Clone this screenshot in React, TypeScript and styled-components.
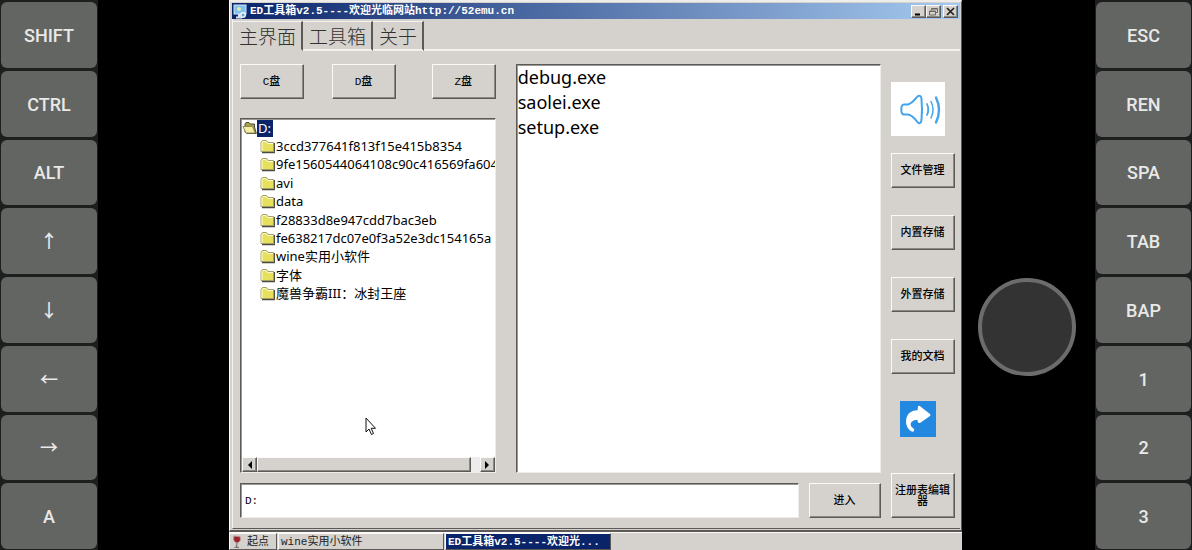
import React from "react";
import styled, { createGlobalStyle, css } from "styled-components";

const face = "#d5d2ce";
const shade = "#5c5a58";
const navy = "#0a246a";
const mono = `"Liberation Mono", "Noto Sans CJK SC", monospace`;
const sans = `"Noto Sans", "Noto Sans CJK SC", sans-serif`;

const GlobalStyle = createGlobalStyle`
  *, *::before, *::after { box-sizing: border-box; }
  body { margin: 0; background: #000; font-family: ${sans}; color: #000; }
  button, input { margin: 0; font: inherit; color: inherit; border-radius: 0; }
  ul { margin: 0; padding: 0; list-style: none; }
`;

const raised = css`
  border: 1px solid;
  border-color: #fbfaf8 ${shade} ${shade} #fbfaf8;
  box-shadow: inset -1px -1px 0 #8a8884;
`;

const sunken = css`
  border: 1px solid;
  border-color: ${shade} #efedea #efedea ${shade};
  box-shadow: inset 1px 1px 0 #9a9894;
`;

const Device = styled.div`
  display: grid;
  grid-template-columns: 98px 131px minmax(0, 1fr) 133px 97px;
  min-height: 100vh;
`;

const KeyColumn = styled.nav`
  display: flex;
  flex-direction: column;
  gap: 3px;
  padding: 2px 1px 1px;
  background: #1d1f1e;
`;

const Key = styled.button`
  flex: 1;
  padding: 2px 0 0;
  border: 0;
  border-radius: 6px;
  background: #636562;
  color: #e9e9e8;
  font-family: Roboto, "Noto Sans CJK SC", sans-serif;
  font-weight: 500;
  font-size: 18px;
  line-height: 24px;
`;

const Desktop = styled.main`
  display: flex;
  flex-direction: column;
  background: ${face};
`;

const Frame = styled.section`
  display: flex;
  flex: 1;
  flex-direction: column;
  padding: 1px 1px 1px 2px;
  border-top: 2px solid #efedea;
  border-left: 1px solid #fff;
  border-right: 1px solid ${shade};
  border-bottom: 2px solid ${shade};
`;

const TitleBar = styled.header`
  display: flex;
  align-items: center;
  height: 16px;
  padding: 0 2px 0 1px;
  gap: 3px;
  background: linear-gradient(90deg, ${navy}, #a6caf0);
  color: #fff;
`;

const Title = styled.h1`
  flex: 1;
  margin: 0;
  overflow: hidden;
  white-space: nowrap;
  font: bold 11px/16px ${mono};
`;

const Controls = styled.div`
  display: flex;
`;

const ControlButton = styled.button<{ $apart?: boolean }>`
  ${raised}
  display: grid;
  place-items: center;
  width: 15px;
  height: 13px;
  padding: 0;
  margin-left: ${(p) => (p.$apart ? "2px" : "0")};
  background: ${face};
`;

const Tabs = styled.div`
  display: flex;
  height: 32px;
  padding-top: 2px;
  border-left: 1px solid #f5f3f0;
`;

const Tab = styled.button<{ $active?: boolean }>`
  padding: 0 5px 0 6px;
  border: 0;
  border-top: 1px solid #f5f3f0;
  border-right: 2px solid ${shade};
  border-bottom: 2px solid ${(p) => (p.$active ? face : "#f2f0ed")};
  background: none;
  color: #34322f;
  font-family: "Noto Sans CJK SC", sans-serif;
  font-weight: 300;
  font-size: 19px;
  line-height: 24px;
`;

const TabFiller = styled.div`
  flex: 1;
  border-bottom: 2px solid #f2f0ed;
`;

const Page = styled.div`
  display: flex;
  flex: 1;
  gap: 10px;
  padding: 13px 5px 10px 7px;
  border-left: 1px solid #f5f3f0;
  border-bottom: 1px solid ${shade};
`;

const Work = styled.div`
  display: flex;
  flex: 1;
  min-width: 0;
  flex-direction: column;
  gap: 10px;
`;

const Panes = styled.div`
  display: grid;
  flex: 1;
  grid-template-columns: 7fr 10fr;
  gap: 20px;
`;

const DriveSide = styled.div`
  display: flex;
  min-width: 0;
  flex-direction: column;
  gap: 19px;
`;

const Drives = styled.div`
  display: flex;
  gap: 28px;

  & > :last-child { margin-left: auto; }
`;

const PushButton = styled.button<{ $wide?: boolean; $tall?: boolean }>`
  ${raised}
  flex: none;
  width: ${(p) => (p.$wide ? "72px" : "64px")};
  height: ${(p) => (p.$tall ? "45px" : "35px")};
  padding: 2px 1px 0 0;
  background: ${face};
  font: 500 11px/11px ${mono};
`;

const Tree = styled.div`
  ${sunken}
  position: relative;
  display: flex;
  flex: 1;
  flex-direction: column;
  justify-content: space-between;
  overflow: hidden;
  padding-left: 1px;
  background: #fff;
`;

const TreeList = styled.ul`
  display: grid;
  grid-auto-rows: 1fr;
  height: 184px;
`;

const TreeRow = styled.li<{ $child?: boolean }>`
  display: flex;
  align-items: center;
  padding-left: ${(p) => (p.$child ? "18px" : "0")};
  white-space: nowrap;
  font-size: 13px;
  line-height: 17px;
`;

const Selected = styled.span`
  padding: 0 2px 0 1px;
  background: ${navy};
  color: #fff;
`;

const ScrollBar = styled.div`
  display: flex;
  height: 15px;
  background: #efedec;
`;

const ScrollArrow = styled.button`
  ${raised}
  display: grid;
  place-items: center;
  width: 15px;
  padding: 0;
  background: ${face};
`;

const Thumb = styled.div`
  ${raised}
  flex: 1;
  margin-right: 9px;
  background: ${face};
`;

const Pointer = styled.svg`
  position: absolute;
  left: 124px;
  top: 298px;
`;

const FileList = styled.ul`
  ${sunken}
  padding-left: 1px;
  background: #fff;
  font-size: 18px;
  line-height: 25px;
`;

const AddressRow = styled.form`
  display: flex;
  gap: 10px;
`;

const Address = styled.input`
  ${sunken}
  flex: 1;
  min-width: 0;
  height: 35px;
  padding: 0 4px;
  background: #fff;
  font: 11px/16px ${mono};
`;

const Side = styled.aside`
  display: flex;
  flex-direction: column;
  gap: 17px;
  padding-top: 18px;

  & > :last-child { margin-top: auto; }
`;

const Shortcuts = styled.div`
  display: flex;
  flex-direction: column;
  gap: 27px;
`;

const PictureButton = styled.button<{ $small?: boolean }>`
  display: block;
  width: ${(p) => (p.$small ? "36px" : "54px")};
  height: ${(p) => (p.$small ? "36px" : "54px")};
  margin-left: ${(p) => (p.$small ? "9px" : "0")};
  padding: 0;
  border: 0;
  background: ${(p) => (p.$small ? "#2389e0" : "#fff")};
`;

const TaskBar = styled.footer`
  display: flex;
  gap: 1px;
  height: 18px;
  border-top: 1px solid #fbfaf8;
`;

const Task = styled.button<{ $start?: boolean; $active?: boolean }>`
  display: flex;
  flex: 0 1 auto;
  align-items: center;
  gap: 5px;
  width: ${(p) => (p.$start ? "48px" : "166px")};
  padding: 0 2px;
  border: 1px solid;
  border-color: #fbfaf8 ${shade} ${shade} #fbfaf8;
  background: ${(p) => (p.$active ? navy : face)};
  color: ${(p) => (p.$active ? "#fff" : "#222")};
  white-space: nowrap;
  font: ${(p) => (p.$active ? "bold" : "normal")} 11px/14px ${mono};
`;

const StickArea = styled.div`
  display: grid;
  grid-template-rows: 8fr auto 5fr;
  justify-items: center;
  padding-right: 4px;
`;

const Stick = styled.button`
  grid-row: 2;
  width: 98px;
  height: 98px;
  border: 4px solid #6c6c6c;
  border-radius: 50%;
  background: #333;
`;

const Folder = () => (
  <svg width="16" height="15" viewBox="0 0 16 15" aria-hidden="true">
    <path d="M2 13.500H14.300V4" fill="none" stroke="#4a4940" strokeWidth="1.3" />
    <path d="M1 12.500V3.500L2.500 1.500H6.500L8 3.500H13.500V12.500Z" fill="#e6e05c" stroke="#a3a06a" />
    <path d="M2 12V4L3 2.500H6L7.500 4.500H13" fill="none" stroke="#fdfbd8" />
  </svg>
);

const OpenFolder = () => (
  <svg width="15" height="14" viewBox="0 0 15 14" aria-hidden="true">
    <path d="M3 11V3L4 1.500H7L8.500 3H12.500V6L14.300 12.500H5Z" fill="#a7a14a" stroke="#4d4b3b" />
    <path d="M1 5.500H10.500L13 12H4Z" fill="#f5f0a0" stroke="#8d8a58" />
  </svg>
);

const TitleIcon = () => (
  <svg width="14" height="15" viewBox="0 0 14 15" aria-hidden="true">
    <rect x="1" y="1" width="12" height="9" fill="#7cc2f3" stroke="#d6e8f7" />
    <circle cx="6" cy="5" r="2" fill="#ece9a1" />
    <path d="M6 10v3M3 13.500h6" stroke="#dce6ee" strokeWidth="2" />
    <circle cx="10" cy="11" r="3" fill="#eff4f8" />
    <path d="M8.600 11h3M10 9.600v3" stroke="#3d86c4" />
  </svg>
);

const Speaker = () => (
  <svg width="54" height="54" viewBox="0 0 54 54" fill="none" stroke="#45a4ec" strokeLinecap="round" aria-hidden="true">
    <path d="M13 22.500H17C21 21.500 24 17.500 26 15C28 12.500 30.500 14 30.500 17Q31.500 27.500 30.500 38C30 41.500 28 42.500 26 39.500C23 35.500 21 33 17 32.500H13C10.500 32.500 10.300 30 10.300 27.500C10.300 25 10.500 22.500 13 22.500Z" strokeWidth="2" />
    <path d="M36 22Q38.500 27.500 36 33" strokeWidth="1.800" />
    <path d="M40 19.500Q44 27.500 40 36" strokeWidth="1.500" />
    <path d="M45 15.500Q51 28 45 40.500" strokeWidth="2.400" />
  </svg>
);

const Share = () => (
  <svg width="36" height="36" viewBox="0 0 36 36" aria-hidden="true">
    <path d="M18 5.500Q19 4 21 6L30 13Q31 14.200 30 15L20 22Q17.500 22.500 17.500 19C13 18.500 10.500 21 10.700 24Q11 26 13 27Q15 28.500 14 30Q12.500 31.500 10 29.500C4.500 25 5 15 10 11.500Q13 9.300 17.500 9.300Z" fill="#fff" />
  </svg>
);

const Wine = () => (
  <svg width="10" height="13" viewBox="0 0 10 13" aria-hidden="true">
    <path d="M2 1L8 1.500L8.500 5Q7 8 5 8Q1.500 7 1.500 4Z" fill="#9d202b" stroke="#b99a98" />
    <path d="M5 8L4.500 12M2.500 12.300H7" stroke="#6b5f5e" fill="none" />
  </svg>
);

const leftKeys = ["SHIFT", "CTRL", "ALT", "↑", "↓", "←", "→", "A"];
const rightKeys = ["ESC", "REN", "SPA", "TAB", "BAP", "1", "2", "3"];
const folders = [
  "3ccd377641f813f15e415b8354",
  "9fe1560544064108c90c416569fa604",
  "avi",
  "data",
  "f28833d8e947cdd7bac3eb",
  "fe638217dc07e0f3a52e3dc154165a",
  "wine实用小软件",
  "字体",
  "魔兽争霸III：冰封王座",
];
const files = ["debug.exe", "saolei.exe", "setup.exe"];
const places = ["文件管理", "内置存储", "外置存储", "我的文档"];

export default function App() {
  return (
    <>
      <GlobalStyle />
      <Device>
        <KeyColumn>
          {leftKeys.map((k) => <Key key={k}>{k}</Key>)}
        </KeyColumn>
        <div />
        <Desktop>
          <Frame>
            <TitleBar>
              <TitleIcon />
              <Title>ED工具箱v2.5----欢迎光临网站http://52emu.cn</Title>
              <Controls>
                <ControlButton aria-label="最小化">
                  <svg width="11" height="9" viewBox="0 0 11 9"><path d="M2 7.500H7" stroke="#000" strokeWidth="2" /></svg>
                </ControlButton>
                <ControlButton aria-label="还原">
                  <svg width="11" height="9" viewBox="0 0 11 9" fill="none" stroke="#6b6864">
                    <path d="M3.500 3V1.500H9.500V5.500H8M3.500 2H9.500M1.500 4H7.500V8H1.500ZM1.500 4.500H7.500" />
                  </svg>
                </ControlButton>
                <ControlButton aria-label="关闭" $apart>
                  <svg width="11" height="9" viewBox="0 0 11 9"><path d="M2 1L9 8M9 1L2 8" stroke="#222" strokeWidth="1.700" /></svg>
                </ControlButton>
              </Controls>
            </TitleBar>
            <Tabs role="tablist">
              <Tab role="tab" aria-selected="true" $active>主界面</Tab>
              <Tab role="tab" aria-selected="false">工具箱</Tab>
              <Tab role="tab" aria-selected="false">关于</Tab>
              <TabFiller />
            </Tabs>
            <Page>
              <Work>
                <Panes>
                  <DriveSide>
                    <Drives>
                      <PushButton>C盘</PushButton>
                      <PushButton>D盘</PushButton>
                      <PushButton>Z盘</PushButton>
                    </Drives>
                    <Tree>
                      <TreeList>
                        <TreeRow><OpenFolder /><Selected>D:</Selected></TreeRow>
                        {folders.map((f) => (
                          <TreeRow key={f} $child><Folder /><span>{f}</span></TreeRow>
                        ))}
                      </TreeList>
                      <ScrollBar>
                        <ScrollArrow aria-label="向左滚动">
                          <svg width="6" height="8" viewBox="0 0 6 8"><path d="M5 0V8L1 4Z" /></svg>
                        </ScrollArrow>
                        <Thumb />
                        <ScrollArrow aria-label="向右滚动">
                          <svg width="6" height="8" viewBox="0 0 6 8"><path d="M1 0V8L5 4Z" /></svg>
                        </ScrollArrow>
                      </ScrollBar>
                      <Pointer width="12" height="19" viewBox="0 0 12 19" aria-hidden="true">
                        <path d="M1 1V15L4 12L6.500 17.500L8.500 16.500L6.200 11.300H10.500Z" fill="#fff" stroke="#111" />
                      </Pointer>
                    </Tree>
                  </DriveSide>
                  <FileList>
                    {files.map((f) => <li key={f}>{f}</li>)}
                  </FileList>
                </Panes>
                <AddressRow onSubmit={(e) => e.preventDefault()}>
                  <Address aria-label="路径" defaultValue="D:" />
                  <PushButton $wide>进入</PushButton>
                </AddressRow>
              </Work>
              <Side>
                <PictureButton aria-label="音量"><Speaker /></PictureButton>
                <Shortcuts>
                  {places.map((p) => <PushButton key={p}>{p}</PushButton>)}
                  <PictureButton $small aria-label="快捷方式"><Share /></PictureButton>
                </Shortcuts>
                <PushButton $tall>注册表编辑器</PushButton>
              </Side>
            </Page>
          </Frame>
          <TaskBar>
            <Task $start><Wine />起点</Task>
            <Task>wine实用小软件</Task>
            <Task $active>ED工具箱v2.5----欢迎光...</Task>
          </TaskBar>
        </Desktop>
        <StickArea>
          <Stick aria-label="摇杆" />
        </StickArea>
        <KeyColumn>
          {rightKeys.map((k) => <Key key={k}>{k}</Key>)}
        </KeyColumn>
      </Device>
    </>
  );
}
